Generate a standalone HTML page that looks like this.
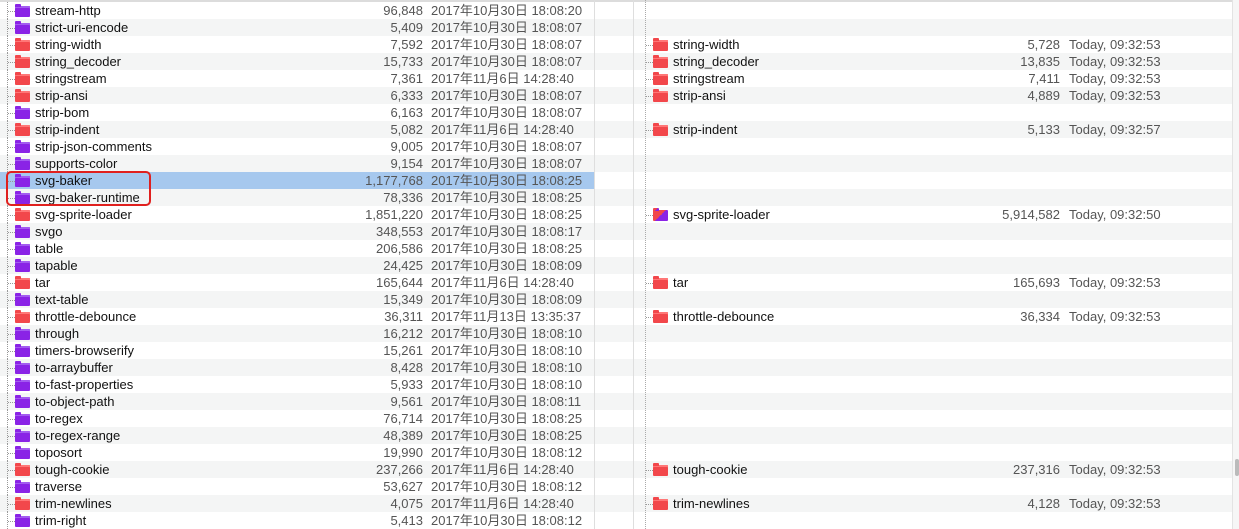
<!DOCTYPE html>
<html><head><meta charset="utf-8"><style>
body{margin:0;width:1239px;height:529px;overflow:hidden;background:#fff;font-family:"Liberation Sans","Noto Sans CJK JP",sans-serif;font-size:13px;position:relative}
.hdr{position:absolute;left:0;top:0;width:1232px;height:2px;background:#dcdcdc}
.r{position:absolute;left:0;width:1232px;height:17px;line-height:17px}
.r:nth-child(even){background:#f4f5f5}
.r.sel .l{background:#a6c8ee}
.l{position:absolute;left:0;width:594px;height:17px}
.c{position:absolute;white-space:nowrap}
.n{left:35px;color:#111}
.s{right:171px;color:#555;text-align:right}
.d{left:431px;color:#555}
.rn{left:673px;color:#111}
.rs{right:172px;color:#555}
.rd{left:1069px;color:#555}
.dv{position:absolute;left:7px;top:0;height:17px;border-left:1px dotted #999}
.dh{position:absolute;left:8px;top:9px;width:7px;border-top:1px dotted #999}
.rdh{position:absolute;left:646px;top:9px;width:7px;border-top:1px dotted #999}
.f{position:absolute;top:4px;width:15px;height:11px;border-radius:1px}
.f:before{content:"";position:absolute;left:0;top:-2px;width:6px;height:3px;border-radius:1px 1px 0 0;background:inherit}
.P{background:#8a23e6;box-shadow:inset 0 2px #a35cf0}
.R{background:#f2474b;box-shadow:inset 0 2px #f77}
.M{background:linear-gradient(135deg,#f2474b 50%,#8a23e6 50%)}
.lf{left:15px}.rf{left:653px}
.vl{position:absolute;top:0;height:529px;width:1px;background:#dedede}
.sb{position:absolute;left:1232px;top:0;width:7px;height:529px;background:#f6f6f6;border-left:1px solid #e3e3e3}
.th{position:absolute;left:1235px;top:459px;width:4px;height:17px;background:#bbb;border-radius:2px}
.box{position:absolute;left:6px;top:171px;width:141px;height:31px;border:2px solid #e0201e;border-radius:5px}
.rdv{position:absolute;left:645px;top:0;height:529px;border-left:1px dotted #aaa}
</style></head><body>
<div class="hdr"></div>
<div style="position:absolute;left:0;top:2px;width:1232px;height:527px">
<div class="r" style="top:0"><div class="l"><i class="dv"></i><i class="dh"></i><b class="f lf P"></b><span class="c n">stream-http</span><span class="c s">96,848</span><span class="c d">2017年10月30日 18:08:20</span></div></div>
<div class="r" style="top:17px"><div class="l"><i class="dv"></i><i class="dh"></i><b class="f lf P"></b><span class="c n">strict-uri-encode</span><span class="c s">5,409</span><span class="c d">2017年10月30日 18:08:07</span></div></div>
<div class="r" style="top:34px"><div class="l"><i class="dv"></i><i class="dh"></i><b class="f lf R"></b><span class="c n">string-width</span><span class="c s">7,592</span><span class="c d">2017年10月30日 18:08:07</span></div><i class="rdh"></i><b class="f rf R"></b><span class="c rn">string-width</span><span class="c rs">5,728</span><span class="c rd">Today, 09:32:53</span></div>
<div class="r" style="top:51px"><div class="l"><i class="dv"></i><i class="dh"></i><b class="f lf R"></b><span class="c n">string_decoder</span><span class="c s">15,733</span><span class="c d">2017年10月30日 18:08:07</span></div><i class="rdh"></i><b class="f rf R"></b><span class="c rn">string_decoder</span><span class="c rs">13,835</span><span class="c rd">Today, 09:32:53</span></div>
<div class="r" style="top:68px"><div class="l"><i class="dv"></i><i class="dh"></i><b class="f lf R"></b><span class="c n">stringstream</span><span class="c s">7,361</span><span class="c d">2017年11月6日 14:28:40</span></div><i class="rdh"></i><b class="f rf R"></b><span class="c rn">stringstream</span><span class="c rs">7,411</span><span class="c rd">Today, 09:32:53</span></div>
<div class="r" style="top:85px"><div class="l"><i class="dv"></i><i class="dh"></i><b class="f lf R"></b><span class="c n">strip-ansi</span><span class="c s">6,333</span><span class="c d">2017年10月30日 18:08:07</span></div><i class="rdh"></i><b class="f rf R"></b><span class="c rn">strip-ansi</span><span class="c rs">4,889</span><span class="c rd">Today, 09:32:53</span></div>
<div class="r" style="top:102px"><div class="l"><i class="dv"></i><i class="dh"></i><b class="f lf P"></b><span class="c n">strip-bom</span><span class="c s">6,163</span><span class="c d">2017年10月30日 18:08:07</span></div></div>
<div class="r" style="top:119px"><div class="l"><i class="dv"></i><i class="dh"></i><b class="f lf R"></b><span class="c n">strip-indent</span><span class="c s">5,082</span><span class="c d">2017年11月6日 14:28:40</span></div><i class="rdh"></i><b class="f rf R"></b><span class="c rn">strip-indent</span><span class="c rs">5,133</span><span class="c rd">Today, 09:32:57</span></div>
<div class="r" style="top:136px"><div class="l"><i class="dv"></i><i class="dh"></i><b class="f lf P"></b><span class="c n">strip-json-comments</span><span class="c s">9,005</span><span class="c d">2017年10月30日 18:08:07</span></div></div>
<div class="r" style="top:153px"><div class="l"><i class="dv"></i><i class="dh"></i><b class="f lf P"></b><span class="c n">supports-color</span><span class="c s">9,154</span><span class="c d">2017年10月30日 18:08:07</span></div></div>
<div class="r sel" style="top:170px"><div class="l"><i class="dv"></i><i class="dh"></i><b class="f lf P"></b><span class="c n">svg-baker</span><span class="c s">1,177,768</span><span class="c d">2017年10月30日 18:08:25</span></div></div>
<div class="r" style="top:187px"><div class="l"><i class="dv"></i><i class="dh"></i><b class="f lf P"></b><span class="c n">svg-baker-runtime</span><span class="c s">78,336</span><span class="c d">2017年10月30日 18:08:25</span></div></div>
<div class="r" style="top:204px"><div class="l"><i class="dv"></i><i class="dh"></i><b class="f lf R"></b><span class="c n">svg-sprite-loader</span><span class="c s">1,851,220</span><span class="c d">2017年10月30日 18:08:25</span></div><i class="rdh"></i><b class="f rf M"></b><span class="c rn">svg-sprite-loader</span><span class="c rs">5,914,582</span><span class="c rd">Today, 09:32:50</span></div>
<div class="r" style="top:221px"><div class="l"><i class="dv"></i><i class="dh"></i><b class="f lf P"></b><span class="c n">svgo</span><span class="c s">348,553</span><span class="c d">2017年10月30日 18:08:17</span></div></div>
<div class="r" style="top:238px"><div class="l"><i class="dv"></i><i class="dh"></i><b class="f lf P"></b><span class="c n">table</span><span class="c s">206,586</span><span class="c d">2017年10月30日 18:08:25</span></div></div>
<div class="r" style="top:255px"><div class="l"><i class="dv"></i><i class="dh"></i><b class="f lf P"></b><span class="c n">tapable</span><span class="c s">24,425</span><span class="c d">2017年10月30日 18:08:09</span></div></div>
<div class="r" style="top:272px"><div class="l"><i class="dv"></i><i class="dh"></i><b class="f lf R"></b><span class="c n">tar</span><span class="c s">165,644</span><span class="c d">2017年11月6日 14:28:40</span></div><i class="rdh"></i><b class="f rf R"></b><span class="c rn">tar</span><span class="c rs">165,693</span><span class="c rd">Today, 09:32:53</span></div>
<div class="r" style="top:289px"><div class="l"><i class="dv"></i><i class="dh"></i><b class="f lf P"></b><span class="c n">text-table</span><span class="c s">15,349</span><span class="c d">2017年10月30日 18:08:09</span></div></div>
<div class="r" style="top:306px"><div class="l"><i class="dv"></i><i class="dh"></i><b class="f lf R"></b><span class="c n">throttle-debounce</span><span class="c s">36,311</span><span class="c d">2017年11月13日 13:35:37</span></div><i class="rdh"></i><b class="f rf R"></b><span class="c rn">throttle-debounce</span><span class="c rs">36,334</span><span class="c rd">Today, 09:32:53</span></div>
<div class="r" style="top:323px"><div class="l"><i class="dv"></i><i class="dh"></i><b class="f lf P"></b><span class="c n">through</span><span class="c s">16,212</span><span class="c d">2017年10月30日 18:08:10</span></div></div>
<div class="r" style="top:340px"><div class="l"><i class="dv"></i><i class="dh"></i><b class="f lf P"></b><span class="c n">timers-browserify</span><span class="c s">15,261</span><span class="c d">2017年10月30日 18:08:10</span></div></div>
<div class="r" style="top:357px"><div class="l"><i class="dv"></i><i class="dh"></i><b class="f lf P"></b><span class="c n">to-arraybuffer</span><span class="c s">8,428</span><span class="c d">2017年10月30日 18:08:10</span></div></div>
<div class="r" style="top:374px"><div class="l"><i class="dv"></i><i class="dh"></i><b class="f lf P"></b><span class="c n">to-fast-properties</span><span class="c s">5,933</span><span class="c d">2017年10月30日 18:08:10</span></div></div>
<div class="r" style="top:391px"><div class="l"><i class="dv"></i><i class="dh"></i><b class="f lf P"></b><span class="c n">to-object-path</span><span class="c s">9,561</span><span class="c d">2017年10月30日 18:08:11</span></div></div>
<div class="r" style="top:408px"><div class="l"><i class="dv"></i><i class="dh"></i><b class="f lf P"></b><span class="c n">to-regex</span><span class="c s">76,714</span><span class="c d">2017年10月30日 18:08:25</span></div></div>
<div class="r" style="top:425px"><div class="l"><i class="dv"></i><i class="dh"></i><b class="f lf P"></b><span class="c n">to-regex-range</span><span class="c s">48,389</span><span class="c d">2017年10月30日 18:08:25</span></div></div>
<div class="r" style="top:442px"><div class="l"><i class="dv"></i><i class="dh"></i><b class="f lf P"></b><span class="c n">toposort</span><span class="c s">19,990</span><span class="c d">2017年10月30日 18:08:12</span></div></div>
<div class="r" style="top:459px"><div class="l"><i class="dv"></i><i class="dh"></i><b class="f lf R"></b><span class="c n">tough-cookie</span><span class="c s">237,266</span><span class="c d">2017年11月6日 14:28:40</span></div><i class="rdh"></i><b class="f rf R"></b><span class="c rn">tough-cookie</span><span class="c rs">237,316</span><span class="c rd">Today, 09:32:53</span></div>
<div class="r" style="top:476px"><div class="l"><i class="dv"></i><i class="dh"></i><b class="f lf P"></b><span class="c n">traverse</span><span class="c s">53,627</span><span class="c d">2017年10月30日 18:08:12</span></div></div>
<div class="r" style="top:493px"><div class="l"><i class="dv"></i><i class="dh"></i><b class="f lf R"></b><span class="c n">trim-newlines</span><span class="c s">4,075</span><span class="c d">2017年11月6日 14:28:40</span></div><i class="rdh"></i><b class="f rf R"></b><span class="c rn">trim-newlines</span><span class="c rs">4,128</span><span class="c rd">Today, 09:32:53</span></div>
<div class="r" style="top:510px"><div class="l"><i class="dv"></i><i class="dh"></i><b class="f lf P"></b><span class="c n">trim-right</span><span class="c s">5,413</span><span class="c d">2017年10月30日 18:08:12</span></div></div>
</div>
<div class="vl" style="left:594px"></div>
<div class="vl" style="left:633px"></div>
<div class="rdv"></div>
<div class="sb"></div><div class="th"></div>
<div class="box"></div>
</body></html>
